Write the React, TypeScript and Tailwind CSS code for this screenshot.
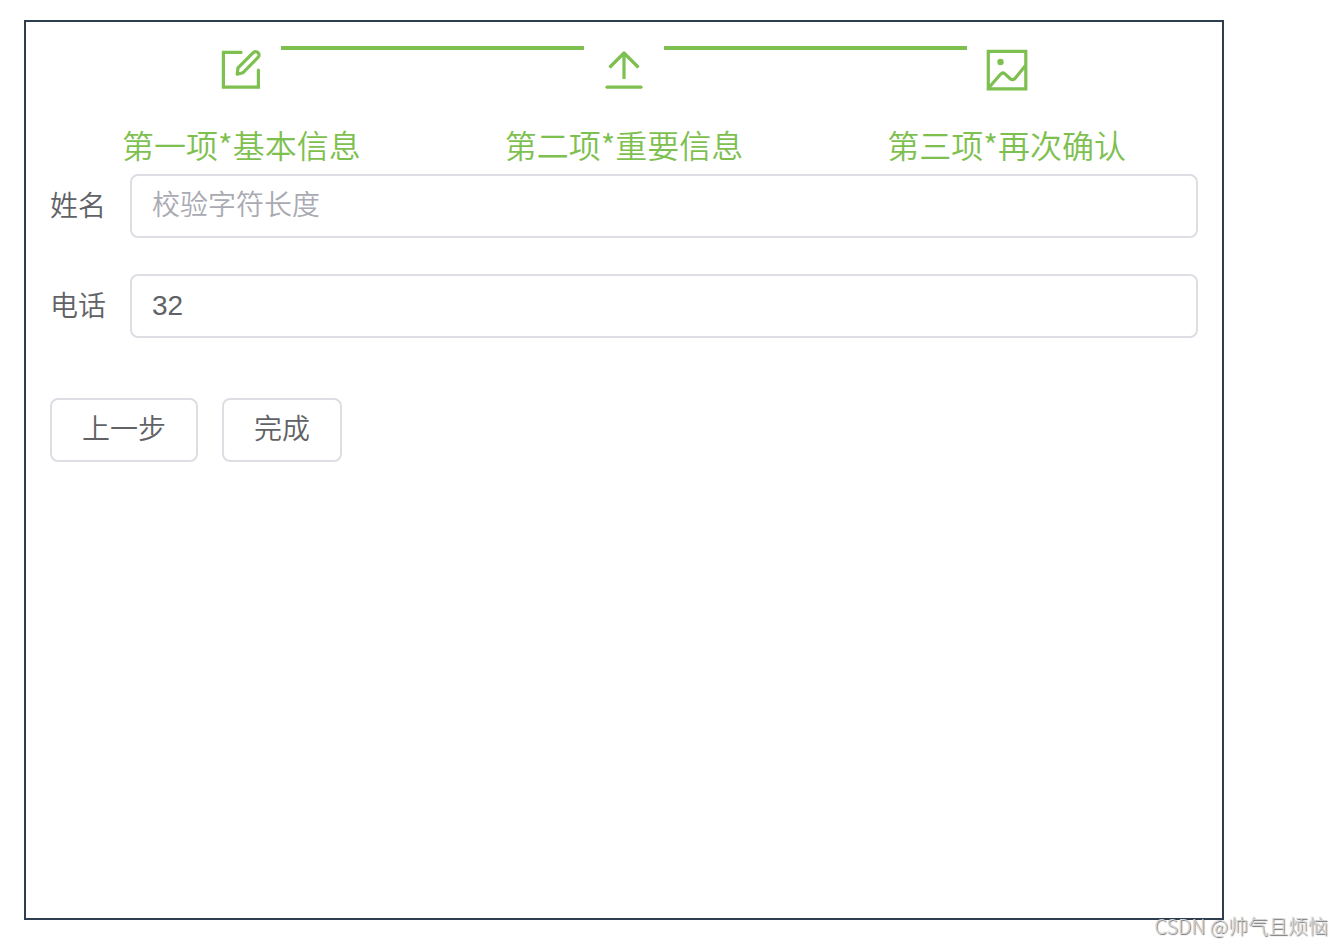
import { useState, type ReactNode } from "react";

interface Step {
    title: string;
    icon: ReactNode;
}

const iconProps = {
    viewBox: "0 0 48 48",
    fill: "none",
    stroke: "currentColor",
    strokeWidth: 3.2,
    strokeLinecap: "round" as const,
    strokeLinejoin: "round" as const,
    className: "w-12 h-12",
    "aria-hidden": true,
};

const steps: Step[] = [
    {
        title: "第一项*基本信息",
        icon: (
            <svg {...iconProps}>
                <path d="M24 6.400H6.400v34.800h35V24" strokeLinejoin="miter" />
                <path d="M20.200 28.200l.8-6.400L36.200 6.600a3.300 3.300 0 0 1 4.800 0a3.300 3.300 0 0 1 0 4.800L25.800 26.800z" />
            </svg>
        ),
    },
    {
        title: "第二项*重要信息",
        icon: (
            <svg {...iconProps}>
                <path d="M24 33V7M9.500 21.500L24 7l14.500 14.500" strokeLinecap="butt" />
                <path d="M7 41.200h34" />
            </svg>
        ),
    },
    {
        title: "第三项*再次确认",
        icon: (
            <svg {...iconProps}>
                <path d="M5.300 5.300h37.500v37.500H5.300z" strokeLinejoin="miter" />
                <path d="M6 41.500l11.500-13.200q2.500-2.500 5 0l4.500 4.200q2.500 2.200 5 0L42.500 19.500" strokeLinecap="butt" />
                <circle cx="17.500" cy="16" r="3.200" fill="currentColor" stroke="none" />
            </svg>
        ),
    },
];

const inputClass =
    "flex-1 min-w-0 h-16 px-5 rounded-lg border-2 border-[#dddee4] bg-white text-[28px] text-[#606266] placeholder:text-[#a9aab2] outline-none focus:border-[#409eff]";

const buttonClass =
    "h-16 px-[30px] rounded-lg border-2 border-[#dddee4] bg-white text-[28px] leading-7 text-[#606266] hover:border-[#c6e2ff]";

const labelClass = "w-20 pt-0.5 text-[28px] text-[#606266]";

function Steps() {
    return (
        <ol className="grid grid-cols-3 text-[#7ec050]">
            {steps.map((step, index) => (
                <li key={step.title}>
                    <div className="grid grid-cols-[1fr_80px_1fr]">
                        <span className={index > 0 ? "h-1 bg-[#7ec050]" : "h-1"} />
                        <span className="flex justify-center">{step.icon}</span>
                        <span className={index < steps.length - 1 ? "h-1 bg-[#7ec050]" : "h-1"} />
                    </div>
                    <p className="mt-8 text-center text-[32px] leading-9 font-['Noto_Sans_CJK_SC',sans-serif]">
                        {step.title}
                    </p>
                </li>
            ))}
        </ol>
    );
}

export default function App() {
    const [name, setName] = useState("");
    const [phone, setPhone] = useState("32");

    return (
        <div className="relative flex min-h-screen bg-white pt-5 pb-[26px] pl-6 pr-[120px] font-[350] font-['Liberation_Sans','Noto_Sans_CJK_SC',sans-serif]">
            <main className="flex-1 border-2 border-[#2c3e50] p-6">
                <Steps />

                <form className="mt-3" onSubmit={(e) => e.preventDefault()}>
                    <div className="flex items-center">
                        <label htmlFor="name" className={labelClass}>姓名</label>
                        <input
                            id="name"
                            type="text"
                            value={name}
                            placeholder="校验字符长度"
                            onChange={(e) => setName(e.target.value)}
                            className={inputClass}
                        />
                    </div>
                    <div className="mt-9 flex items-center">
                        <label htmlFor="phone" className={labelClass}>电话</label>
                        <input
                            id="phone"
                            type="text"
                            value={phone}
                            onChange={(e) => setPhone(e.target.value)}
                            className={inputClass}
                        />
                    </div>
                    <div className="mt-[60px] flex gap-6">
                        <button type="button" className={buttonClass}>上一步</button>
                        <button type="submit" className={buttonClass}>完成</button>
                    </div>
                </form>
            </main>

            <span className="absolute right-4 bottom-1 text-[20px] leading-8 font-light text-[#d4d4d4] [text-shadow:1px_1px_1px_#707070] font-['Noto_Sans_CJK_SC',sans-serif]">
                CSDN @帅气且烦恼
            </span>
        </div>
    );
}
